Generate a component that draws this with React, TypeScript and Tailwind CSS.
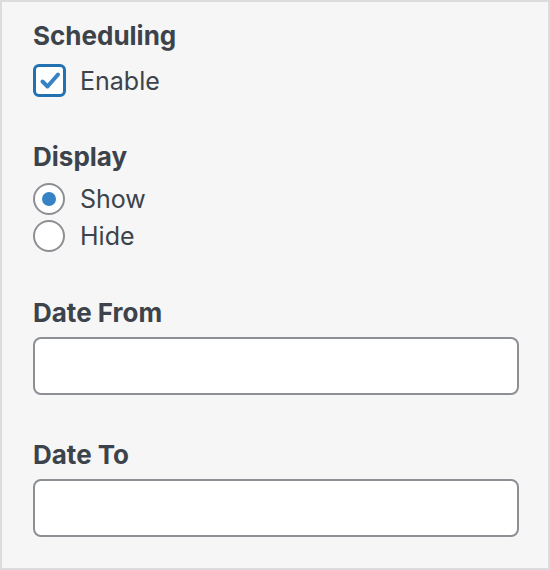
import React from 'react'

// ── Small form controls ───────────────────────────────────────────────────────

function Checkbox({ checked }: { checked: boolean }) {
  return (
    <span className="flex h-[33px] w-[33px] shrink-0 items-center justify-center rounded-[6px] border-[3px] border-[#2271b1] bg-white">
      {checked && (
        <svg width="24" height="24" viewBox="0 0 24 24" className="block">
          <path d="M4.5 12.5 L9.5 17.5 L20 5.5" fill="none" stroke="#3582c4" strokeWidth="4" strokeLinecap="round" strokeLinejoin="round" />
        </svg>
      )}
    </span>
  )
}

function Radio({ checked }: { checked: boolean }) {
  return (
    <span className="flex h-[32px] w-[32px] shrink-0 items-center justify-center rounded-full border-2 border-[#8c8f94] bg-white">
      {checked && <span className="h-[14px] w-[14px] rounded-full bg-[#3582c4]" />}
    </span>
  )
}

function Label({ children, className = '' }: { children: React.ReactNode; className?: string }) {
  return <div className={`text-[26px] leading-[30px] font-bold text-[#3c434a] ${className}`}>{children}</div>
}

function DateField({ label, className = '' }: { label: string; className?: string }) {
  return (
    <div className={className}>
      <Label>{label}</Label>
      <input
        type="text"
        className="mt-[9px] block h-[58px] w-full rounded-[8px] border-2 border-[#8c8f94] bg-white px-3 text-[22px] outline-none"
      />
    </div>
  )
}

// ── Panel ─────────────────────────────────────────────────────────────────────

export default function App() {
  return (
    <div
      className="h-[570px] w-[550px] border-2 border-[#dcdcde] bg-[#f6f6f6] pt-[19px] pl-[31px] pr-[29px] text-[#3c434a]"
      style={{ fontFamily: 'Inter, "Noto Sans", sans-serif' }}
    >
      <Label>Scheduling</Label>
      <label className="mt-[13px] flex items-center gap-[14px] text-[25px] leading-[30px]">
        <Checkbox checked />
        <span>Enable</span>
      </label>

      <Label className="mt-[45px]">Display</Label>
      <div className="mt-[11px] flex flex-col gap-[5px]">
        <label className="flex items-center gap-[15px] text-[25px] leading-[30px]">
          <Radio checked />
          <span>Show</span>
        </label>
        <label className="flex items-center gap-[15px] text-[25px] leading-[30px]">
          <Radio checked={false} />
          <span>Hide</span>
        </label>
      </div>

      <DateField label="Date From" className="mt-[46px]" />
      <DateField label="Date To" className="mt-[45px]" />
    </div>
  )
}
